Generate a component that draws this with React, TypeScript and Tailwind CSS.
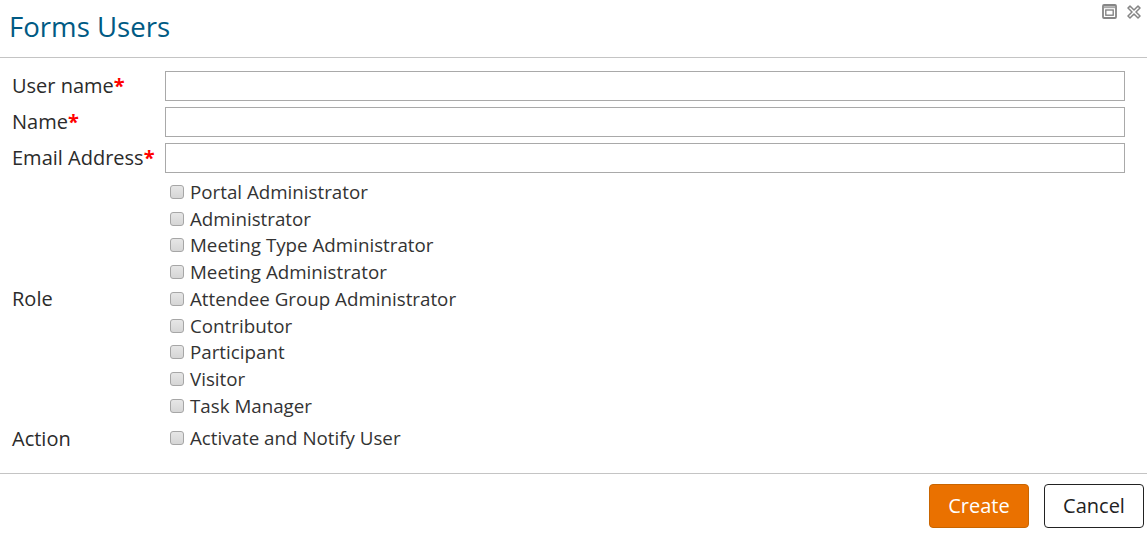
const roles = [
  "Portal Administrator",
  "Administrator",
  "Meeting Type Administrator",
  "Meeting Administrator",
  "Attendee Group Administrator",
  "Contributor",
  "Participant",
  "Visitor",
  "Task Manager",
];

function Check({ label }: { label: string }) {
  return (
    <div className="flex h-[26.75px] items-center">
      <span className="mr-[6px] ml-[5px] box-border h-[14px] w-[14px] rounded-[3px] border border-[#a6a6a6] bg-gradient-to-b from-[#e6e6e6] to-[#d6d6d6]" />
      <span className="text-[18.75px] text-[#333]">{label}</span>
    </div>
  );
}

function TextRow({ label }: { label: string }) {
  return (
    <div className="flex h-[30px] items-center">
      <div className="w-[165px] shrink-0 pl-[12px] font-medium text-[#2b2b2b]">
        {label}
        <span className="font-bold text-[#f00]">*</span>
      </div>
      <div className="box-border h-[30px] w-[960px] border border-[#a9a9a9] bg-white" />
    </div>
  );
}

export default function App() {
  return (
    <div
      className="relative h-[534px] w-[1147px] overflow-hidden bg-white text-[20px] text-[#2b2b2b]"
      style={{ fontFamily: '"Open Sans", sans-serif' }}
    >
      <div className="absolute top-[4px] right-[6px] flex items-center gap-[10px]">
        <svg width="15" height="15" viewBox="0 0 15 15" fill="none">
          <rect x="1" y="1" width="13" height="13" rx="1" stroke="#868686" strokeWidth="1.8" />
          <rect x="3.8" y="6" width="7.4" height="5.2" stroke="#7c7c7c" strokeWidth="1.3" />
          <path d="M2 3.2h11" stroke="#a8a8a8" strokeWidth="2" />
        </svg>
        <svg width="14" height="14" viewBox="0 0 14 14" fill="none">
          <path d="M3 1 7 5l4-4 2 2-4 4 4 4-2 2-4-4-4 4-2-2 4-4-4-4z" stroke="#858585" strokeWidth="1.5" strokeLinejoin="round" />
        </svg>
      </div>
      <header className="box-border h-[58px] border-b border-[#c4c4c4] pt-[6px] pl-[9px]">
        <h1 className="text-[27.6px] leading-[40px] font-medium text-[#005a84]">Forms Users</h1>
      </header>
      <div className="box-border h-[416px] border-b border-[#c4c4c4] pt-[13px]">
        <div className="flex flex-col gap-[6px]">
          <TextRow label="User name" />
          <TextRow label="Name" />
          <TextRow label="Email Address" />
        </div>
        <div className="mt-[5.55px] flex items-center">
          <div className="w-[165px] shrink-0 pl-[12px] font-medium">Role</div>
          <div className="flex flex-col">
            {roles.map((r) => (
              <Check key={r} label={r} />
            ))}
          </div>
        </div>
        <div className="mt-[3.6px] flex items-center">
          <div className="w-[165px] shrink-0 pt-[1px] pl-[12px] font-medium">Action</div>
          <Check label="Activate and Notify User" />
        </div>
      </div>
      <footer className="flex justify-end gap-[15px] pt-[10px] pr-[3px]">
        <button className="box-border h-[44px] w-[100px] rounded-[4px] border border-[#c96500] bg-[#ea7100] text-white">
          Create
        </button>
        <button className="box-border h-[44px] w-[100px] rounded-[4px] border border-[#222] bg-white text-[#222]">
          Cancel
        </button>
      </footer>
    </div>
  );
}
